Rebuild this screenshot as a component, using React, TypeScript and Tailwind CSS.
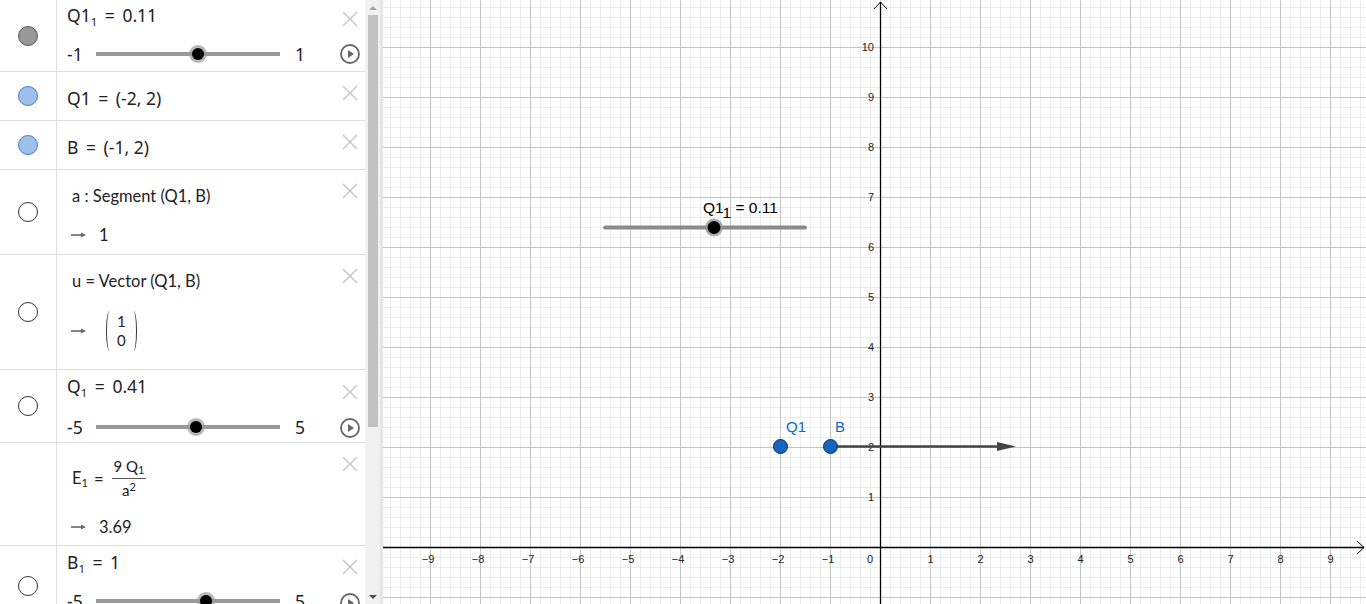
import React from "react";

const sans = { fontFamily: '"Noto Sans", "DejaVu Sans", sans-serif' };
const tex = { fontFamily: 'Lato, "DejaVu Sans", sans-serif' };

function CloseIcon() {
  return (
    <svg width="18" height="18" viewBox="0 0 18 18" className="block">
      <line x1="2" y1="2" x2="16" y2="16" stroke="#c8c8c8" strokeWidth="1.6" />
      <line x1="16" y1="2" x2="2" y2="16" stroke="#c8c8c8" strokeWidth="1.6" />
    </svg>
  );
}

function PlayIcon() {
  return (
    <svg width="22" height="22" viewBox="0 0 22 22" className="block">
      <circle cx="11" cy="11" r="9" fill="none" stroke="#666" strokeWidth="1.8" />
      <path d="M9 7 L15 11 L9 15 Z" fill="#666" />
    </svg>
  );
}

function Marble({ kind }: { kind: "gray" | "blue" | "empty" | "none" }) {
  if (kind === "none") return null;
  const cls =
    kind === "gray"
      ? "bg-[#989898] border-[#555]"
      : kind === "blue"
      ? "bg-[#9dbfe8] border-[#3f7fd6]"
      : "bg-white border-[#333]";
  return <div className={`w-[20px] h-[20px] rounded-full border ${cls}`} />;
}

function Arrow() {
  return (
    <svg width="16" height="8" viewBox="0 0 16 8" className="block">
      <line x1="0" y1="4" x2="12" y2="4" stroke="#666" strokeWidth="1.6" />
      <path d="M10 1.5 L15 4 L10 6.5 Z" fill="#666" />
    </svg>
  );
}

function Sub({ children, size = 11.5, drop = 4 }: { children: React.ReactNode; size?: number; drop?: number }) {
  return (
    <span className="relative" style={{ fontSize: size, top: drop }}>
      {children}
    </span>
  );
}

function Eq() {
  return <span className="mx-[3px]">=</span>;
}

function Slider({ min, max, value }: { min: number; max: number; value: number }) {
  const pct = ((value - min) / (max - min)) * 100;
  return (
    <div className="flex items-center h-[20px] text-[17.5px] text-[#222]" style={sans}>
      <span className="w-[29px]">{min}</span>
      <div className="relative w-[184px] h-[4px] bg-[#999]">
        <div
          className="absolute top-1/2 w-[18px] h-[18px] -ml-[9px] -mt-[9px] rounded-full bg-[#9a9a9a]/70 flex items-center justify-center"
          style={{ left: `${pct}%` }}
        >
          <div className="w-[12px] h-[12px] rounded-full bg-black" />
        </div>
      </div>
      <span className="ml-[15px]">{max}</span>
    </div>
  );
}

type RowProps = {
  h: number;
  marble: "gray" | "blue" | "empty" | "none";
  xTop: number;
  playTop?: number;
  children: React.ReactNode;
};

function Row({ h, marble, xTop, playTop, children }: RowProps) {
  return (
    <div className="flex border-b border-[#dedede] shrink-0" style={{ height: h }}>
      <div className="w-[57px] shrink-0 border-r border-[#dedede] flex items-center justify-center">
        <Marble kind={marble} />
      </div>
      <div className="flex-1 pl-[10px] relative">{children}</div>
      <div className="w-[30px] shrink-0 flex flex-col items-center">
        <div style={{ marginTop: xTop }}>
          <CloseIcon />
        </div>
        {playTop !== undefined && (
          <div style={{ marginTop: playTop }}>
            <PlayIcon />
          </div>
        )}
      </div>
    </div>
  );
}

function AlgebraPanel() {
  return (
    <div className="w-[365px] h-full overflow-hidden flex flex-col bg-white text-[#222]">
      <Row h={72} marble="gray" xTop={10} playTop={15}>
        <div className="pt-[5px] text-[17.5px] leading-[20px] whitespace-nowrap" style={sans}>
          Q1<Sub>1</Sub> <Eq /> 0.11
        </div>
        <div className="mt-[16px]">
          <Slider min={-1} max={1} value={0.11} />
        </div>
      </Row>
      <Row h={49} marble="blue" xTop={12}>
        <div className="pt-[16px] text-[17.5px] leading-[20px] whitespace-nowrap" style={sans}>
          Q1 <Eq /> (-2, 2)
        </div>
      </Row>
      <Row h={49} marble="blue" xTop={12}>
        <div className="pt-[16px] text-[17.5px] leading-[20px] whitespace-nowrap" style={sans}>
          B <Eq /> (-1, 2)
        </div>
      </Row>
      <Row h={85} marble="empty" xTop={12}>
        <div className="pt-[16px] pl-[5px] text-[16.5px] leading-[20px] whitespace-nowrap" style={tex}>
          a : Segment (Q1, B)
        </div>
        <div className="mt-[19px] flex items-center gap-[12px] pl-[4px] text-[16.5px] leading-[20px]" style={tex}>
          <Arrow />
          <span>1</span>
        </div>
      </Row>
      <Row h={115} marble="empty" xTop={12}>
        <div className="pt-[16px] pl-[5px] text-[16.5px] leading-[20px] whitespace-nowrap" style={tex}>
          u = Vector (Q1, B)
        </div>
        <div className="mt-[19px] flex items-center pl-[4px]">
          <Arrow />
          <div className="ml-[19px] flex items-center h-[42px]">
            <div className="w-[7px] h-[40px] border-l-[1.5px] border-[#333] rounded-l-[100%]" />
            <div className="flex flex-col items-center text-[15px] leading-[19px] px-[4px]" style={tex}>
              <span>1</span>
              <span>0</span>
            </div>
            <div className="w-[7px] h-[40px] border-r-[1.5px] border-[#333] rounded-r-[100%]" />
          </div>
        </div>
      </Row>
      <Row h={73} marble="empty" xTop={13} playTop={16}>
        <div className="pt-[6px] text-[17.5px] leading-[20px] whitespace-nowrap" style={sans}>
          Q<Sub>1</Sub> <Eq /> 0.41
        </div>
        <div className="mt-[18px]">
          <Slider min={-5} max={5} value={0.41} />
        </div>
      </Row>
      <Row h={103} marble="none" xTop={12}>
        <div className="pt-[13px] pl-[5px] flex items-center text-[16.5px] leading-[20px]" style={tex}>
          <span className="whitespace-nowrap">
            E<Sub size={11} drop={3}>1</Sub>
          </span>
          <span className="ml-[6px] mr-[8px]">=</span>
          <div className="flex flex-col items-center text-[15px]">
            <span className="px-[2px] leading-[20px] whitespace-nowrap">
              9 Q<Sub size={11} drop={2}>1</Sub>
            </span>
            <span className="border-t border-[#555] w-full text-center leading-[18px] pt-[2px] whitespace-nowrap">
              a<span className="relative text-[11px] -top-[5px]">2</span>
            </span>
          </div>
        </div>
        <div className="mt-[16px] flex items-center gap-[12px] pl-[4px] text-[16.5px] leading-[20px]" style={tex}>
          <Arrow />
          <span>3.69</span>
        </div>
      </Row>
      <Row h={80} marble="empty" xTop={12} playTop={16}>
        <div className="pt-[6px] text-[17.5px] leading-[20px] whitespace-nowrap" style={sans}>
          B<Sub>1</Sub> <Eq /> 1
        </div>
        <div className="mt-[16px]">
          <Slider min={-5} max={5} value={1} />
        </div>
      </Row>
    </div>
  );
}

function Scrollbar() {
  return (
    <div className="w-[15px] h-full bg-[#f1f1f1] flex flex-col items-center shrink-0">
      <div className="h-[15px] flex items-center justify-center">
        <div className="w-0 h-0 border-l-[4px] border-r-[4px] border-b-[4px] border-l-transparent border-r-transparent border-b-[#a3a3a3]" />
      </div>
      <div className="w-[10px] h-[412px] bg-[#c1c1c1]" />
      <div className="flex-1" />
      <div className="h-[15px] flex items-center justify-center">
        <div className="w-0 h-0 border-l-[4px] border-r-[4px] border-t-[4px] border-l-transparent border-r-transparent border-t-[#505050]" />
      </div>
    </div>
  );
}

function Graph() {
  const W = 983;
  const H = 604;
  const ox = 497;
  const oy = 547;
  const u = 50;
  const minor: number[] = [];
  const minorY: number[] = [];
  for (let x = ox % 10; x <= W; x += 10) minor.push(x);
  for (let y = oy % 10; y <= H; y += 10) minorY.push(y);
  const majorX: number[] = [];
  const majorY: number[] = [];
  for (let x = ox % u; x <= W; x += u) majorX.push(x);
  for (let y = oy % u; y <= H; y += u) majorY.push(y);
  const xs = [-9, -8, -7, -6, -5, -4, -3, -2, -1, 1, 2, 3, 4, 5, 6, 7, 8, 9];
  const ys = [1, 2, 3, 4, 5, 6, 7, 8, 9, 10];
  const font = '"Liberation Sans", Arial, sans-serif';
  const px = (v: number) => ox + v * u;
  const py = (v: number) => oy - v * u;
  return (
    <svg width={W} height={H} className="block bg-white" style={{ fontFamily: font }}>
      {minor.map((x) => (
        <line key={"mx" + x} x1={x + 0.5} y1={0} x2={x + 0.5} y2={H} stroke="#ebebeb" strokeWidth="1" />
      ))}
      {minorY.map((y) => (
        <line key={"my" + y} x1={0} y1={y + 0.5} x2={W} y2={y + 0.5} stroke="#ebebeb" strokeWidth="1" />
      ))}
      {majorX.map((x) => (
        <line key={"Mx" + x} x1={x + 0.5} y1={0} x2={x + 0.5} y2={H} stroke="#c4c4c4" strokeWidth="1" />
      ))}
      {majorY.map((y) => (
        <line key={"My" + y} x1={0} y1={y + 0.5} x2={W} y2={y + 0.5} stroke="#c4c4c4" strokeWidth="1" />
      ))}
      <line x1={0} y1={oy + 0.5} x2={W - 2} y2={oy + 0.5} stroke="#000" strokeWidth="1.3" />
      <path d={`M${W - 9} ${oy - 6} L${W - 2} ${oy + 0.5} L${W - 9} ${oy + 7}`} fill="none" stroke="#000" strokeWidth="1" />
      <line x1={ox + 0.5} y1={2} x2={ox + 0.5} y2={H} stroke="#000" strokeWidth="1.3" />
      <path d={`M${ox - 6} ${9} L${ox + 0.5} ${2} L${ox + 7} ${9}`} fill="none" stroke="#000" strokeWidth="1" />
      {xs.map((v) => (
        <text key={"tx" + v} x={px(v) + (v < 0 ? -2 : 0.5)} y={oy + 16} fontSize="11" textAnchor="middle" fill="#222">
          {v < 0 ? "\u2212" + -v : v}
        </text>
      ))}
      <text x={ox - 7} y={oy + 16} fontSize="11" textAnchor="end" fill="#222">
        0
      </text>
      {ys.map((v) => (
        <text key={"ty" + v} x={ox - 6} y={py(v) + 4} fontSize="11" textAnchor="end" fill="#222">
          {v}
        </text>
      ))}
      <line x1={222} y1={227.5} x2={422} y2={227.5} stroke="#8a8a8a" strokeWidth="4" strokeLinecap="round" />
      <circle cx={331} cy={227.5} r={9} fill="#9a9a9a" opacity="0.8" />
      <circle cx={331} cy={227.5} r={6.5} fill="#000" />
      <text x={320} y={213} fontSize="15.5" fill="#000">
        Q1
        <tspan dy="5">1</tspan>
        <tspan dy="-5"> = 0.11</tspan>
      </text>
      <line x1={447} y1={446.5} x2={618} y2={446.5} stroke="#444" strokeWidth="2.5" />
      <path d="M614 442 L633 446.5 L614 451 Z" fill="#444" />
      <circle cx={397.5} cy={446.5} r={7} fill="#1565c0" stroke="#0b2f5c" strokeWidth="1" />
      <circle cx={447.5} cy={446.5} r={7} fill="#1565c0" stroke="#0b2f5c" strokeWidth="1" />
      <text x={403} y={432} fontSize="15" fill="#1565c0">
        Q1
      </text>
      <text x={452} y={432} fontSize="15" fill="#1565c0">
        B
      </text>
    </svg>
  );
}

export default function App() {
  return (
    <div className="w-[1366px] h-[604px] flex overflow-hidden bg-white">
      <AlgebraPanel />
      <Scrollbar />
      <div className="w-[3px] h-full bg-[#e6e6e6] shrink-0" />
      <div className="flex-1 h-full overflow-hidden">
        <Graph />
      </div>
    </div>
  );
}
